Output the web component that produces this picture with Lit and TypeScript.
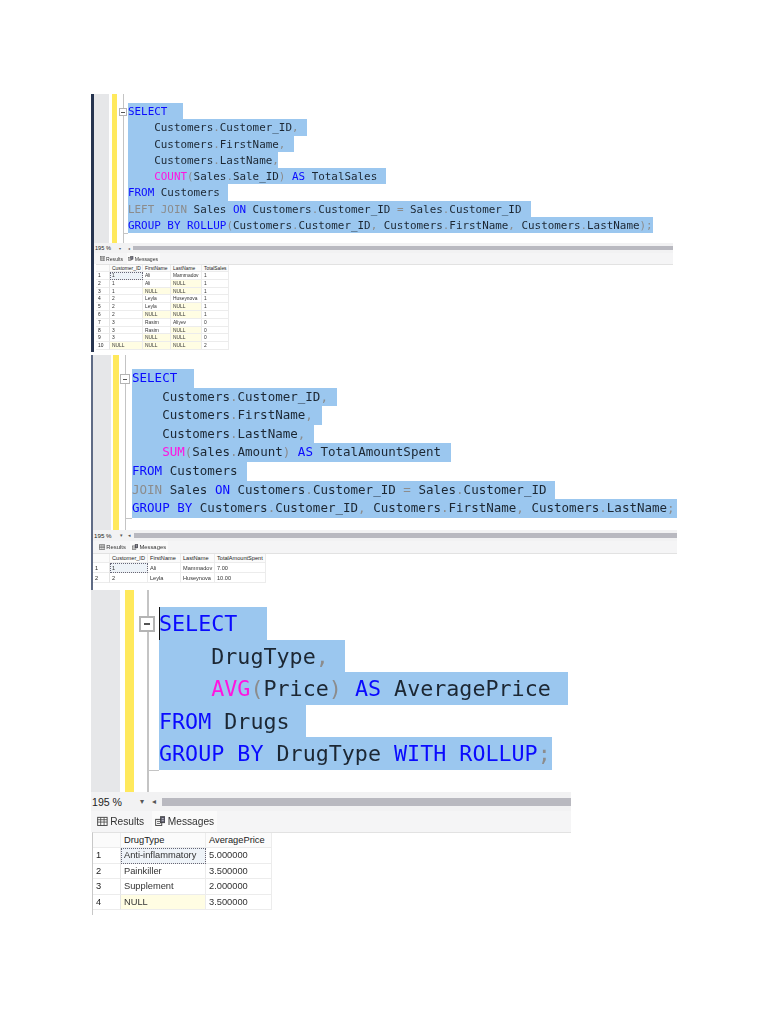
import { LitElement, html, css, svg } from "lit";
import { customElement, property } from "lit/decorators.js";

type Tok = [string, string?];
interface Line { w: number; t: Tok[]; }
interface Grid { cols: number[]; rows: string[][]; head: string[]; }

const k = "k", g = "g", p = "p";

const P1: Line[] = [
  { w: 55, t: [["SELECT", k]] },
  { w: 179, t: [["    Customers"], [".", g], ["Customer_ID"], [",", g]] },
  { w: 166, t: [["    Customers"], [".", g], ["FirstName"], [",", g]] },
  { w: 150, t: [["    Customers"], [".", g], ["LastName"], [",", g]] },
  { w: 258, t: [["    "], ["COUNT", p], ["(", g], ["Sales"], [".", g], ["Sale_ID"], [")", g], [" "], ["AS", k], [" TotalSales"]] },
  { w: 100, t: [["FROM", k], [" Customers"]] },
  { w: 403, t: [["LEFT JOIN", g], [" Sales "], ["ON", k], [" Customers"], [".", g], ["Customer_ID "], ["=", g], [" Sales"], [".", g], ["Customer_ID"]] },
  { w: 525, t: [["GROUP BY", k], [" "], ["ROLLUP", k], ["(", g], ["Customers"], [".", g], ["Customer_ID"], [",", g], [" Customers"], [".", g], ["FirstName"], [",", g], [" Customers"], [".", g], ["LastName"], [");", g]] },
];
const P2: Line[] = [
  { w: 62, t: [["SELECT", k]] },
  { w: 205, t: [["    Customers"], [".", g], ["Customer_ID"], [",", g]] },
  { w: 190, t: [["    Customers"], [".", g], ["FirstName"], [",", g]] },
  { w: 182, t: [["    Customers"], [".", g], ["LastName"], [",", g]] },
  { w: 319, t: [["    "], ["SUM", p], ["(", g], ["Sales"], [".", g], ["Amount"], [")", g], [" "], ["AS", k], [" TotalAmountSpent"]] },
  { w: 115, t: [["FROM", k], [" Customers"]] },
  { w: 423, t: [["JOIN", g], [" Sales "], ["ON", k], [" Customers"], [".", g], ["Customer_ID "], ["=", g], [" Sales"], [".", g], ["Customer_ID"]] },
  { w: 545, t: [["GROUP BY", k], [" Customers"], [".", g], ["Customer_ID"], [",", g], [" Customers"], [".", g], ["FirstName"], [",", g], [" Customers"], [".", g], ["LastName"], [";", g]] },
];
const P3: Line[] = [
  { w: 108, t: [["SELECT", k]] },
  { w: 186, t: [["    DrugType"], [",", g]] },
  { w: 409, t: [["    "], ["AVG", p], ["(", g], ["Price"], [")", g], [" "], ["AS", k], [" AveragePrice"]] },
  { w: 147, t: [["FROM", k], [" Drugs"]] },
  { w: 393, t: [["GROUP BY", k], [" DrugType "], ["WITH ROLLUP", k], [";", g]] },
];

const G1: Grid = {
  cols: [14, 33, 28, 31, 27],
  head: ["", "Customer_ID", "FirstName", "LastName", "TotalSales"],
  rows: [
    ["1", "1", "Ali", "Mammadov", "1"],
    ["2", "1", "Ali", "NULL", "1"],
    ["3", "1", "NULL", "NULL", "1"],
    ["4", "2", "Leyla", "Huseynova", "1"],
    ["5", "2", "Leyla", "NULL", "1"],
    ["6", "2", "NULL", "NULL", "1"],
    ["7", "3", "Rasim", "Aliyev", "0"],
    ["8", "3", "Rasim", "NULL", "0"],
    ["9", "3", "NULL", "NULL", "0"],
    ["10", "NULL", "NULL", "NULL", "2"],
  ],
};
const G2: Grid = {
  cols: [17, 38, 33, 34, 51],
  head: ["", "Customer_ID", "FirstName", "LastName", "TotalAmountSpent"],
  rows: [
    ["1", "1", "Ali", "Mammadov", "7.00"],
    ["2", "2", "Leyla", "Huseynova", "10.00"],
  ],
};
const G3: Grid = {
  cols: [28, 85, 66],
  head: ["", "DrugType", "AveragePrice"],
  rows: [
    ["1", "Anti-inflammatory", "5.000000"],
    ["2", "Painkiller", "3.500000"],
    ["3", "Supplement", "2.000000"],
    ["4", "NULL", "3.500000"],
  ],
};

const gridIcon = svg`<rect x="1" y="2" width="14" height="12" fill="#fff" stroke="#444" stroke-width="1.4"/><path d="M1 5.5h14M1 9h14M5.5 2v12M10.5 2v12" stroke="#444" stroke-width="1.2" fill="none"/>`;
const msgIcon = svg`<rect x="1" y="5" width="9" height="9" fill="#fff" stroke="#444" stroke-width="1.4"/><path d="M3 8h5M3 11h5" stroke="#444" stroke-width="1.2"/><rect x="8" y="1" width="7" height="9" fill="#556" stroke="#333"/><path d="M10 4h3M10 7h3" stroke="#fff" stroke-width="1"/>`;

@customElement("sql-pane")
class SqlPane extends LitElement {
  @property({ attribute: false }) lines: Line[] = [];
  @property({ attribute: false }) grid!: Grid;
  @property({ type: Boolean }) caret = false;

  static styles = css`
    :host { display: block; overflow: hidden; background: #fff; font-family: "Liberation Sans", Arial, sans-serif; }
    :host(.p1) { width: 582px; height: 258px; margin-bottom: 3px; --strip: 3px; --stripc: #26344f; --gray: 15px; --g1: 3px; --yel: 5px; --g2: 3px; --fold: 8px; --line: 3px; --bx: 8px; --bxl: -1px; --bxt: 9px;
      --font: 10.9px; --lh: 16.25px; --ts: 2px; --top: 9px; --edh: 149px; --u: 1; --gl: 2px; --bar-l: 39px; --arr1: 25px; --stath: 10px; --tabh: 11px; --tabl: 4px; --rowh: 7.8px; --headh: 7px; --pad: 0px; --gfs: 4.9px; --blur: .3px; --tblur: .35px; --zoomfs: 5.6px; }
    :host(.p2) { width: 586px; height: 235px; --strip: 2px; --stripc: #5f6b85; --gray: 18px; --g1: 2px; --yel: 6px; --g2: 3px; --fold: 10px; --line: 3px; --bx: 10px; --bxl: -2px; --bxt: 10px;
      --font: 12.52px; --lh: 18.62px; --ts: 0px; --top: 14px; --edh: 175px; --u: 1.15; --gl: 0px; --bar-l: 41px; --arr1: 27px; --stath: 11px; --tabh: 12px; --tabl: 4px; --rowh: 10px; --headh: 9px; --pad: 0px; --gfs: 5.6px; --blur: .3px; --tblur: .35px; --zoomfs: 6.2px; }
    :host(.p3) { width: 480px; height: 325px; --strip: 0px; --stripc: #fff; --gray: 29px; --g1: 5px; --yel: 9px; --g2: 5px; --fold: 20px; --line: 8px; --bx: 16px; --bxl: 0px; --bxt: 17px;
      --font: 21.7px; --lh: 32.6px; --ts: 2px; --top: 17px; --edh: 202px; --u: 2; --gl: 1px; --bar-l: 71px; --arr1: 49px; --stath: 19px; --tabh: 21px; --tabl: 3px; --rowh: 15.6px; --headh: 15px; --pad: 0px; --gfs: 9.3px; --blur: .25px; --tblur: .25px; --zoomfs: 10.6px; }

    .wrap { border-left: var(--strip) solid var(--stripc); height: 100%; display: flex; flex-direction: column; }
    .editor { height: var(--edh); display: flex; flex: none; overflow: hidden; }
    .margin { width: var(--gray); background: #e6e7e9; flex: none; }
    .changes { width: var(--yel); background: #ffe95c; flex: none; margin: 0 var(--g2) 0 var(--g1); }
    .fold { width: var(--fold); flex: none; position: relative; }
    .fold-line { position: absolute; left: var(--line); top: 0; bottom: 0; width: max(1px, calc(var(--u) * 1px)); background: #c4c4c4; }
    .fold-box { position: absolute; left: var(--bxl); top: calc(var(--top) + var(--bxt) - var(--bx) / 2); width: var(--bx); height: var(--bx); box-sizing: border-box; background: #fff; border: max(1px, calc(var(--u) * 1px)) solid #b4b4b4; display: flex; align-items: center; justify-content: center; }
    .fold-box i { display: block; width: 55%; height: max(1px, calc(var(--u) * .6px)); background: #555; }
    .fold-end { position: absolute; left: var(--line); top: calc(var(--top) + var(--lh) * var(--n)); width: calc(var(--fold) - var(--line)); height: 1px; background: #c4c4c4; }
    .code { padding-top: var(--top); flex: 1; min-width: 0; overflow: hidden; font-family: "DejaVu Sans Mono", "Liberation Mono", monospace; font-size: var(--font); color: #1c2733; filter: blur(var(--blur)); position: relative; }
    .line { height: var(--lh); line-height: calc(var(--lh) + var(--ts)); background: #9bc7ef; white-space: pre; }
    .caret { position: absolute; left: 0; top: var(--top); width: 1px; height: var(--lh); background: #111; }
    .k { color: #0a0aff; }
    .g { color: #8c8c8c; }
    .p { color: #ff14e0; }

    .status { height: var(--stath); flex: none; display: flex; align-items: center; background: #f2f2f3; color: #222; overflow: hidden; }
    .zoom { font-size: var(--zoomfs); padding-left: 1px; flex: none; width: var(--arr1); box-sizing: border-box; white-space: nowrap; }
    .arrows { flex: none; width: calc(var(--bar-l) - var(--arr1)); display: flex; justify-content: space-between; align-items: center; padding-right: calc(var(--u) * 3px); box-sizing: border-box; font-size: calc(var(--u) * 4px); color: #555; }
    .bar { flex: 1; height: calc(var(--u) * 4px); background: #b9b9c0; }

    .tabs { height: var(--tabh); flex: none; display: flex; align-items: stretch; background: #f5f5f6; color: #333; font-size: calc(var(--u) * 5.1px); padding-left: var(--tabl); gap: calc(var(--u) * 2.2px); filter: blur(.2px); }
    .tab { display: flex; align-items: center; gap: calc(var(--u) * 1.2px); padding: 0 calc(var(--u) * 1.5px); }
    .tab + .tab { background: #fafafa; }
    .tab svg { width: calc(var(--u) * 5.4px); height: calc(var(--u) * 5.4px); flex: none; }

    .results { flex: 1; border-top: 1px solid #e2e2e2; margin-left: var(--gl); padding-top: var(--pad); }
    :host(.p3) .results { border-left: 1px solid #c8c8c8; }
    .table { display: grid; width: max-content; font-size: var(--gfs); color: #333; filter: blur(var(--tblur)); }
    .cell { height: var(--rowh); line-height: var(--rowh); box-sizing: border-box; padding-left: 2px; white-space: nowrap; overflow: hidden; border-right: 1px solid #ececec; border-bottom: 1px solid #ececec; }
    :host(.p3) .cell { padding-left: 3px; }
    .head { color: #222; background: #fbfbfb; height: var(--headh); line-height: var(--headh); }
    .num { color: #222; border-right-color: #e4e4e4; }
    .null { background: #fffde3; }
    .sel { background: #eef3f8; outline: 1px dotted #667; outline-offset: -1px; }
  `;

  render() {
    const gr = this.grid;
    return html`
      <div class="wrap">
        <div class="editor">
          <div class="margin"></div>
          <div class="changes"></div>
          <div class="fold" style="--n:${this.lines.length}">
            <div class="fold-line"></div>
            <div class="fold-end"></div>
            <div class="fold-box"><i></i></div>
          </div>
          <div class="code">
            ${this.lines.map(
              (l) => html`<div class="line" style="width:${l.w}px">${l.t.map(
                ([s, c]) => html`<span class=${c ?? ""}>${s}</span>`
              )}</div>`
            )}
            ${this.caret ? html`<div class="caret"></div>` : ""}
          </div>
        </div>
        <div class="status">
          <div class="zoom">195 %</div>
          <div class="arrows"><span>▾</span><span>◂</span></div>
          <div class="bar"></div>
        </div>
        <div class="tabs">
          <div class="tab"><svg viewBox="0 0 16 16">${gridIcon}</svg><span>Results</span></div>
          <div class="tab"><svg viewBox="0 0 16 16">${msgIcon}</svg><span>Messages</span></div>
        </div>
        <div class="results">
          <div class="table" style="grid-template-columns:${gr.cols.map((c) => c + "px").join(" ")}">
            ${gr.head.map((h) => html`<div class="cell head">${h}</div>`)}
            ${gr.rows.map((r, i) =>
              r.map((v, j) => {
                const cls = j === 0 ? "num" : v === "NULL" ? "null" : i === 0 && j === 1 ? "sel" : "";
                return html`<div class="cell ${cls}">${v}</div>`;
              })
            )}
          </div>
        </div>
      </div>
    `;
  }
}

@customElement("app-root")
export class AppRoot extends LitElement {
  static styles = css`
    :host { display: block; height: 1024px; background: #fff; overflow: hidden; }
    .page { padding: 94px 0 0 91px; display: flex; flex-direction: column; align-items: flex-start; }
  `;
  render() {
    return html`<div class="page">
      <sql-pane class="p1" .lines=${P1} .grid=${G1}></sql-pane>
      <sql-pane class="p2" .lines=${P2} .grid=${G2}></sql-pane>
      <sql-pane class="p3" .lines=${P3} .grid=${G3} caret></sql-pane>
    </div>`;
  }
}
void SqlPane;
